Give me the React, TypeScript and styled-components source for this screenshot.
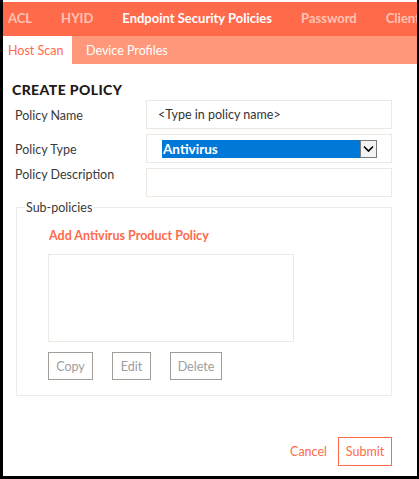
import React from 'react';
import styled, { createGlobalStyle } from 'styled-components';

const GlobalStyle = createGlobalStyle`
  html, body {
    margin: 0;
    padding: 0;
    background: #fff;
  }
  body {
    font-family: 'Lato', 'Open Sans', 'Liberation Sans', sans-serif;
  }
`;

const Frame = styled.div`
  width: 419px;
  height: 479px;
  box-sizing: border-box;
  padding-top: 2px;
  border-left: 3px solid #000;
  border-right: 2px solid #000;
  border-bottom: 3px solid #000;
  display: flex;
  flex-direction: column;
  overflow: hidden;
  background: #fff;
`;

const TopNav = styled.nav`
  height: 34px;
  background: #ff6a4b;
  display: flex;
  align-items: center;
  gap: 29px;
  padding: 0 0 3px 5px;
  box-sizing: border-box;
  white-space: nowrap;
  overflow: hidden;
`;

const TopItem = styled.span<{ active?: boolean }>`
  font-size: 13px;
  font-weight: 700;
  color: ${p => (p.active ? '#ffffff' : '#ffc3b3')};
`;

const SubNav = styled.div`
  height: 28px;
  background: #ff977b;
  display: flex;
  align-items: stretch;
  white-space: nowrap;
`;

const SubTab = styled.span<{ active?: boolean }>`
  display: flex;
  align-items: center;
  padding: ${p => (p.active ? '0 0 0 5px' : '0 0 0 14px')};
  width: ${p => (p.active ? '69px' : 'auto')};
  box-sizing: border-box;
  background: ${p => (p.active ? '#fff' : 'transparent')};
  color: ${p => (p.active ? '#ff6a4b' : '#fff')};
  font-size: 12.5px;
`;

const Content = styled.div`
  flex: 1;
  display: flex;
  flex-direction: column;
  padding: 17px 25px 0 9px;
`;

const Heading = styled.h2`
  margin: 0 0 1px;
  font-size: 14px;
  font-weight: 900;
  letter-spacing: 0.4px;
  color: #231815;
  line-height: 18px;
`;

const FormGrid = styled.div`
  display: grid;
  grid-template-columns: 131px 246px;
  row-gap: 5px;
  padding-left: 3px;
`;

const Label = styled.label<{ top?: boolean }>`
  font-size: 12.5px;
  color: #3a3a3a;
  display: flex;
  align-items: ${p => (p.top ? 'flex-start' : 'center')};
  padding-top: ${p => (p.top ? '0' : '2px')};
  margin-top: ${p => (p.top ? '-1px' : '0')};
`;

const Box = styled.div`
  height: 29px;
  box-sizing: border-box;
  border: 1px solid #efe8e2;
  display: flex;
  align-items: center;
  padding: 0 14px 0 11px;
  font-size: 12.5px;
  color: #333;
`;

const SelectBar = styled.div`
  flex: 1;
  display: flex;
  height: 18px;
  padding-left: 4px;
`;

const Selected = styled.span`
  flex: 1;
  background: #0078d7;
  color: #fff;
  font-weight: 700;
  font-size: 13.5px;
  display: flex;
  align-items: center;
  padding-left: 1px;
`;

const DropButton = styled.span`
  width: 17px;
  height: 18px;
  box-sizing: border-box;
  border: 1px solid #7a7a7a;
  background: #f3f3f3;
  display: flex;
  align-items: center;
  justify-content: center;
`;

const Fieldset = styled.fieldset`
  margin: 3px 0 0 4px;
  width: 376px;
  box-sizing: border-box;
  height: 196px;
  border: 1px solid #e7ecec;
  padding: 0 0 0 31px;
`;

const Legend = styled.legend`
  font-size: 12.5px;
  color: #3a3a3a;
  padding: 0 1px;
  margin-left: -23px;
`;

const AddLink = styled.div`
  color: #ff6a4b;
  font-weight: 700;
  font-size: 12.5px;
  margin: 13px 0 11px 1px;
`;

const ListBox = styled.div`
  width: 246px;
  height: 88px;
  box-sizing: border-box;
  border: 1px solid #efe9e4;
`;

const ButtonRow = styled.div`
  display: flex;
  gap: 19px;
  margin-top: 10px;
`;

const GhostButton = styled.button<{ w: number }>`
  width: ${p => p.w}px;
  height: 28px;
  box-sizing: border-box;
  border: 1px solid #a39d98;
  background: #fff;
  color: #9d9d9d;
  font-family: inherit;
  font-size: 12.5px;
  padding: 0;
`;

const Footer = styled.div`
  margin-top: auto;
  display: flex;
  justify-content: flex-end;
  align-items: center;
  gap: 11px;
  padding: 0 0 10px;
`;

const CancelLink = styled.span`
  color: #ff6a4b;
  font-size: 12.5px;
`;

const SubmitButton = styled.button`
  width: 54px;
  height: 29px;
  box-sizing: border-box;
  border: 1px solid #ff6a4b;
  background: #fff;
  color: #ff6a4b;
  font-family: inherit;
  font-size: 12.5px;
  padding: 0;
`;

export default function App() {
  return (
    <>
      <GlobalStyle />
      <Frame>
        <TopNav>
          <TopItem>ACL</TopItem>
          <TopItem>HYID</TopItem>
          <TopItem active>Endpoint Security Policies</TopItem>
          <TopItem>Password</TopItem>
          <TopItem>Client</TopItem>
        </TopNav>
        <SubNav>
          <SubTab active>Host Scan</SubTab>
          <SubTab>Device Profiles</SubTab>
        </SubNav>
        <Content>
          <Heading>CREATE POLICY</Heading>
          <FormGrid>
            <Label>Policy Name</Label>
            <Box>&lt;Type in policy name&gt;</Box>
            <Label>Policy Type</Label>
            <Box>
              <SelectBar>
                <Selected>Antivirus</Selected>
                <DropButton>
                  <svg width="11" height="8" viewBox="0 0 11 8">
                    <path d="M1 1.5 L5.5 6 L10 1.5" fill="none" stroke="#000" strokeWidth="1.6" />
                  </svg>
                </DropButton>
              </SelectBar>
            </Box>
            <Label top>Policy Description</Label>
            <Box />
          </FormGrid>
          <Fieldset>
            <Legend>Sub-policies</Legend>
            <AddLink>Add Antivirus Product Policy</AddLink>
            <ListBox />
            <ButtonRow>
              <GhostButton w={45}>Copy</GhostButton>
              <GhostButton w={39}>Edit</GhostButton>
              <GhostButton w={52}>Delete</GhostButton>
            </ButtonRow>
          </Fieldset>
          <Footer>
            <CancelLink>Cancel</CancelLink>
            <SubmitButton>Submit</SubmitButton>
          </Footer>
        </Content>
      </Frame>
    </>
  );
}
